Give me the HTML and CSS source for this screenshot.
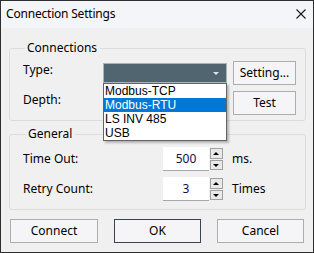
FILE: index.html
```html
<!DOCTYPE html>
<html>
<head>
<meta charset="utf-8">
<link rel="stylesheet" href="styles.css">
</head>
<body>
<div class="window">
  <div class="titlebar">
    <span class="title">Connection Settings</span>
    <svg class="close" width="10" height="10" viewBox="0 0 10 10"><path d="M0.5 0.5 L9.5 9.5 M9.5 0.5 L0.5 9.5" stroke="#1a1a1a" stroke-width="1.1" fill="none"/></svg>
  </div>
  <div class="content">
    <fieldset class="group conn">
      <legend>Connections</legend>
      <div class="grid">
        <span class="label">Type:</span>
        <div class="combo-wrap">
          <div class="combo"><span class="arrow"></span></div>
          <ul class="list">
            <li>Modbus-TCP</li>
            <li class="sel">Modbus-RTU</li>
            <li>LS INV 485</li>
            <li>USB</li>
          </ul>
        </div>
        <button class="btn side">Setting...</button>
        <span class="label">Depth:</span>
        <span></span>
        <button class="btn side">Test</button>
      </div>
    </fieldset>
    <fieldset class="group gen">
      <legend>General</legend>
      <div class="grid2">
        <span class="label">Time Out:</span>
        <div class="spin"><span class="field">500</span><span class="spinbtns"><span class="sb up"></span><span class="sb down"></span></span></div>
        <span class="unit">ms.</span>
        <span class="label">Retry Count:</span>
        <div class="spin"><span class="field">3</span><span class="spinbtns"><span class="sb up"></span><span class="sb down"></span></span></div>
        <span class="unit">Times</span>
      </div>
    </fieldset>
    <div class="buttons">
      <button class="btn wide">Connect</button>
      <button class="btn ok">OK</button>
      <button class="btn">Cancel</button>
    </div>
  </div>
</div>
</body>
</html>
```
FILE: styles.css
```css
* { box-sizing: border-box; }
html, body { margin: 0; padding: 0; }
body {
  font-family: "Noto Sans", "Liberation Sans", sans-serif;
  font-size: 12px;
  line-height: 16px;
  color: #000;
  background: #f0f0f0;
}
.window {
  width: 314px;
  height: 253px;
  border: 1px solid #2e2e2e;
  background: #f0f0f0;
  display: flex;
  flex-direction: column;
}
.titlebar {
  height: 27px;
  background: #f3f5f8;
  display: flex;
  align-items: center;
  justify-content: space-between;
  padding: 0 7px 1px 5px;
}
.title { font-size: 12px; letter-spacing: -0.2px; }
.close { display: block; }
.content {
  padding: 12px 7px 0 8px;
  display: flex;
  flex-direction: column;
}
.group {
  margin: 0;
  border: 1px solid #dcdcdc;
  border-radius: 3px;
  padding: 5px 9px 5px 13px;
}
.group legend {
  padding: 0 3px 0 2px;
  margin-left: 2px;
  line-height: 16px;
}
.gen { margin-top: 5px; padding-bottom: 8px; }
.gen legend { margin-left: 3px; }
.grid {
  display: grid;
  grid-template-columns: 80px 124px 1fr;
  grid-auto-rows: 24px;
  row-gap: 6px;
}
.label { align-self: start; padding-top: 1px; }
.grid2 .label { padding-top: 4px; }
.combo-wrap { position: relative; align-self: center; }
.combo {
  height: 20px;
  background: #506570;
  border: 1px solid #a9b3b8;
  position: relative;
}
.arrow {
  position: absolute;
  right: 7px;
  top: 8px;
  width: 0; height: 0;
  border-left: 3px solid transparent;
  border-right: 3px solid transparent;
  border-top: 3px solid #dfe4e6;
}
.list {
  position: absolute;
  left: 0;
  top: 20px;
  width: 124px;
  margin: 0;
  padding: 0;
  list-style: none;
  background: #fff;
  border: 1px solid #646464;
  box-shadow: 2px 2px 2px rgba(0,0,0,0.25);
  z-index: 5;
  font-family: "Liberation Sans", Arial, sans-serif;
  font-size: 12px;
}
.list li { height: 14px; line-height: 14px; padding-left: 1px; }
.list li.sel { background: #0078d7; color: #fff; }
.btn {
  font: inherit;
  color: #000;
  background: #f5f5f7;
  border: 1px solid #adadad;
  height: 24px;
  padding: 0;
  margin: 0;
}
.side { width: 63px; justify-self: end; }
.grid2 {
  display: grid;
  grid-template-columns: 140px 60px 1fr;
  grid-auto-rows: 24px;
  row-gap: 6px;
}
.spin { display: flex; height: 24px; }
.field {
  width: 46px;
  height: 24px;
  background: #fff;
  border-bottom: 1px solid #a8a8a8;
  text-align: center;
  line-height: 23px;
  color: #10104a;
}
.spinbtns {
  margin-left: 1px;
  width: 13px;
  display: flex;
  flex-direction: column;
  padding-top: 1px;
}
.sb {
  height: 11px;
  background: #e9e9e9;
  border: 1px solid #a0a0a0;
  position: relative;
  margin-bottom: 1px;
}
.sb::after {
  content: "";
  position: absolute;
  left: 2px;
  width: 0; height: 0;
  border-left: 3.5px solid transparent;
  border-right: 3.5px solid transparent;
}
.up::after { top: 3px; border-bottom: 3.5px solid #000; }
.down::after { top: 3px; border-top: 3.5px solid #000; }
.unit { padding-left: 9px; padding-top: 4px; }
.buttons {
  margin-top: 9px;
  margin-left: 1px;
  display: flex;
  gap: 16px;
}
.buttons .btn { width: 87px; }
.buttons .wide { width: 88px; }
.buttons .ok { border-color: #3a4450; }
```
